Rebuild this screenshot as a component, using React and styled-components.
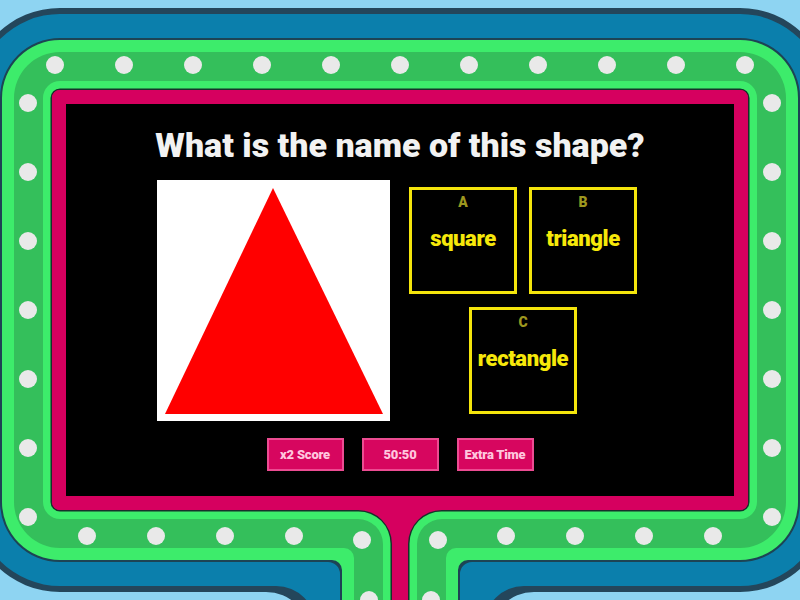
import React from "react";
import styled, { createGlobalStyle } from "styled-components";

const GlobalStyle = createGlobalStyle`
  html, body {
    margin: 0;
    padding: 0;
    background: #8ed4f2;
  }
  * {
    box-sizing: border-box;
  }
`;

const Page = styled.div`
  position: relative;
  width: 800px;
  height: 600px;
  overflow: hidden;
  background: #8ed4f2;
  font-family: Roboto, "Liberation Sans", sans-serif;
`;

const FrameArt = styled.svg`
  position: absolute;
  left: 0;
  top: 0;
  width: 800px;
  height: 600px;
`;

const Screen = styled.div`
  position: relative;
  margin: 90px 0 0 52px;
  width: 696px;
  height: 420px;
  border: 14px solid #d6005f;
  border-radius: 8px;
  background: #000;
  display: flex;
  flex-direction: column;
  align-items: center;
  padding-top: 21px;
`;

const Question = styled.h1`
  margin: 0;
  font-size: 34px;
  line-height: 40px;
  font-weight: 900;
  color: #f2f2f2;
`;

const Body = styled.div`
  display: flex;
  align-items: flex-start;
  gap: 19px;
  margin: 15px 6px 0 0;
`;

const Picture = styled.div`
  width: 233px;
  height: 241px;
  background: #fff;
  display: flex;
`;

const Answers = styled.div`
  display: grid;
  grid-template-columns: 108px 108px;
  column-gap: 12px;
  row-gap: 13px;
  margin-top: 7px;
`;

const AnswerCard = styled.div`
  width: 108px;
  height: 107px;
  border: 3px solid #f4e50c;
  display: flex;
  flex-direction: column;
  align-items: center;
  padding-top: 4px;
  grid-column: ${(p) => (p.$center ? "1 / span 2" : "auto")};
  justify-self: center;
`;

const Letter = styled.span`
  font-size: 14px;
  line-height: 16px;
  font-weight: 900;
  color: #9d971f;
`;

const AnswerText = styled.span`
  margin-top: 16px;
  font-size: 22px;
  line-height: 26px;
  font-weight: 900;
  color: #f6e80a;
  letter-spacing: -0.4px;
`;

const PowerUps = styled.div`
  display: flex;
  gap: 18px;
  margin-top: 17px;
`;

const PowerButton = styled.button`
  width: 77px;
  height: 33px;
  padding: 0;
  border: 2px solid #ec4c92;
  background: #d7065f;
  color: #ffc6de;
  font-family: inherit;
  font-size: 13px;
  font-weight: 900;
  letter-spacing: -0.2px;
  cursor: pointer;
`;

// offset layers of the pink screen + stem shape, largest first
const layers = [
  [82, "#24465b", 44],
  [76, "#0b7fac", 40],
  [52, "#1d4454", 12],
  [50, "#3dec6b", 10],
  [38, "#34bf5b", 10],
  [9, "#3dec6b", 25],
  [1.5, "#17302a", 32],
  [0, "#d6005f", 34],
];

function framePath(d, f) {
  const L = 52 - d, T = 90 - d, R = 748 + d, B = 510 + d;
  const rc = 8 + d;
  const sl = 392 - d, sr = 408 + d;
  const Y = 660;
  return [
    `M${L + rc},${T}`,
    `H${R - rc}`,
    `A${rc},${rc} 0 0 1 ${R},${T + rc}`,
    `V${B - rc}`,
    `A${rc},${rc} 0 0 1 ${R - rc},${B}`,
    `H${sr + f}`,
    `A${f},${f} 0 0 0 ${sr},${B + f}`,
    `V${Y}`,
    `H${sl}`,
    `V${B + f}`,
    `A${f},${f} 0 0 0 ${sl - f},${B}`,
    `H${L + rc}`,
    `A${rc},${rc} 0 0 1 ${L},${B - rc}`,
    `V${T + rc}`,
    `A${rc},${rc} 0 0 1 ${L + rc},${T}`,
    "Z",
  ].join(" ");
}

const dots = [];
for (let k = 0; k <= 10; k++) dots.push([55 + 69 * k, 65]);
for (let k = 0; k <= 6; k++) {
  dots.push([28, 103 + 69 * k]);
  dots.push([772, 103 + 69 * k]);
}
[87, 156, 225, 294, 506, 575, 644, 713].forEach((x) => dots.push([x, 536]));
dots.push([362, 540], [438, 540], [369, 600], [431, 600]);

const answers = [
  { letter: "A", text: "square" },
  { letter: "B", text: "triangle" },
  { letter: "C", text: "rectangle", center: true },
];

const powerUps = ["x2 Score", "50:50", "Extra Time"];

export default function App() {
  return (
    <>
      <GlobalStyle />
      <Page>
        <FrameArt viewBox="0 0 800 600">
          {layers.map(([d, color, f]) => (
            <path key={d} d={framePath(d, f)} fill={color} />
          ))}
          {dots.map(([x, y], i) => (
            <circle key={i} cx={x} cy={y} r="9" fill="#e9e9e9" />
          ))}
        </FrameArt>
        <Screen>
          <Question>What is the name of this shape?</Question>
          <Body>
            <Picture>
              <svg width="233" height="241" viewBox="0 0 233 241">
                <polygon points="116,8 8,234 226,234" fill="#ff0000" />
              </svg>
            </Picture>
            <Answers>
              {answers.map((a) => (
                <AnswerCard key={a.letter} $center={a.center}>
                  <Letter>{a.letter}</Letter>
                  <AnswerText>{a.text}</AnswerText>
                </AnswerCard>
              ))}
            </Answers>
          </Body>
          <PowerUps>
            {powerUps.map((p) => (
              <PowerButton key={p}>{p}</PowerButton>
            ))}
          </PowerUps>
        </Screen>
      </Page>
    </>
  );
}
